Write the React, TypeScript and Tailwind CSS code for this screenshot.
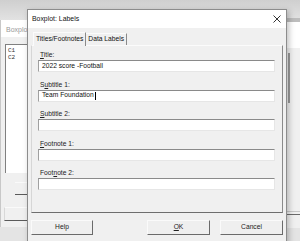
import React from 'react';

// Windows-style "Boxplot: Labels" dialog sitting over older dialogs
const font = { fontFamily: '"Liberation Sans", Arial, sans-serif' };

function Field({ label, value, caret }: { label: React.ReactNode; value?: string; caret?: boolean }) {
  return (
    <div className="flex flex-col h-[29.5px]">
      <div className="h-[10px] flex items-end pb-[1px] pl-[2px] text-[6.7px] leading-none text-[#222]">{label}</div>
      <div className="h-[12px] bg-white border-t border-l border-t-[#8a8a8a] border-l-[#a0a0a0] border-r border-b border-r-[#e6e6e6] border-b-[#e6e6e6] flex items-center pl-[3px] text-[6.7px] leading-none text-[#111]">
        <span className="flex items-center">
          <span>{value}</span>
          {caret && <span className="inline-block w-px h-[8px] bg-black ml-[1px]" />}
        </span>
      </div>
    </div>
  );
}

function Btn({ children, w }: { children: React.ReactNode; w: string }) {
  return (
    <div className={`${w} h-[15px] flex items-center justify-center text-[6.7px] leading-none text-[#222] bg-[#efefef] border-t border-l border-t-[#fafafa] border-l-[#fafafa] border-r border-b border-r-[#6a6a6a] border-b-[#6a6a6a]`}>
      {children}
    </div>
  );
}

export default function App() {
  return (
    <div className="relative w-[300px] h-[241px] overflow-hidden bg-[#f0f0f0]" style={font}>
      {/* desktop strip at top */}
      <div className="absolute left-0 top-0 w-[300px] h-[20px] bg-gradient-to-b from-[#cfcfcf] to-[#e2e2e2]" />

      {/* window behind, left */}
      <div className="absolute left-0 top-[20px] w-[60px] h-[208px] bg-[#f0f0f0] border-l border-[#c8c8c8]">
        <div className="h-[17px] bg-white flex items-center pl-[5px] pt-[4px] text-[7px] text-[#9a9a9a]">Boxplot</div>
        <div className="ml-[4px] mt-[7px] w-[23px] h-[129px] bg-white border-t border-l border-[#808080] pl-[2px] pt-[2px] text-[6px] leading-[7px] text-[#333]" style={{ fontFamily: '"Liberation Mono", monospace' }}>
          <div>C1</div>
          <div>C2</div>
        </div>
        <div className="ml-[14px] mt-[9px] w-[30px] h-[13px] border-b border-r border-[#5a5a5a] border-t border-t-[#fafafa]" />
        <div className="ml-[3px] mt-[12px] w-[40px] h-[14px] border-b border-r border-[#5a5a5a] border-l border-l-[#d8d8d8] border-t border-t-[#fafafa]" />
      </div>
      <div className="absolute left-0 top-[227px] w-[300px] h-[14px] bg-[#e4e4e4]" />

      {/* window behind, right */}
      <div className="absolute left-[284px] top-[18px] w-[20px] h-[210px] bg-[#f0f0f0]">
        <div className="h-[4px] bg-[#bdbdbd]" />
        <div className="h-[26px] bg-white" />
        <div className="ml-[4px] mt-[5px] w-[2px] h-[50px] bg-[#9a9a9a]" />
        <div className="mt-[108px] h-px bg-[#c8c8c8]" />
        <div className="mt-[2px] h-px bg-[#6a6a6a]" />
      </div>

      {/* main dialog */}
      <div className="absolute left-[27px] top-[9px] w-[260px] h-[240px] bg-[#f0f0f0] border border-[#8c8c8c] shadow-[2px_2px_6px_rgba(0,0,0,0.25)] flex flex-col">
        <div className="h-[18px] bg-white flex items-center justify-between pl-[4px] pr-[5px]">
          <span className="text-[6.9px] text-[#111]">Boxplot: Labels</span>
          <svg width="8" height="8" viewBox="0 0 8 8" className="text-[#333]">
            <path d="M0.5 0.5 L7.5 7.5 M7.5 0.5 L0.5 7.5" stroke="currentColor" strokeWidth="1" />
          </svg>
        </div>

        <div className="flex flex-col px-[3px] pt-[4px]">
          {/* tabs */}
          <div className="flex items-end h-[13px] pl-[2px] relative z-10">
            <div className="h-[14px] -mb-px px-[2px] bg-[#f0f0f0] border-t border-l border-[#fbfbfb] border-r border-r-[#8a8a8a] flex items-center text-[6.7px] text-[#111]">
              Titles/Footnotes
            </div>
            <div className="h-[12px] px-[2px] border-t border-t-[#fbfbfb] border-r border-r-[#8a8a8a] flex items-center text-[6.7px] text-[#111]">
              Data Labels
            </div>
          </div>

          {/* tab panel */}
          <div className="h-[168px] border border-[#d6d6d6] border-t-[#fbfbfb] border-r-[#8a8a8a] border-b-[#6e6e6e] pt-[4px] pl-[6px] pr-[7px]">
            <Field label={<span><u>T</u>itle:</span>} value="2022 score -Football" />
            <Field label={<span>S<u>u</u>btitle 1:</span>} value="Team Foundation" caret />
            <Field label={<span><u>S</u>ubtitle 2:</span>} />
            <Field label={<span><u>F</u>ootnote 1:</span>} />
            <Field label={<span>Foot<u>n</u>ote 2:</span>} />
          </div>

          {/* buttons */}
          <div className="flex justify-between mt-[7px]">
            <Btn w="w-[62px]">Help</Btn>
            <div className="flex gap-[10px]">
              <Btn w="w-[63px]"><u>O</u>K</Btn>
              <Btn w="w-[63px]">Cancel</Btn>
            </div>
          </div>
        </div>
      </div>
    </div>
  );
}
